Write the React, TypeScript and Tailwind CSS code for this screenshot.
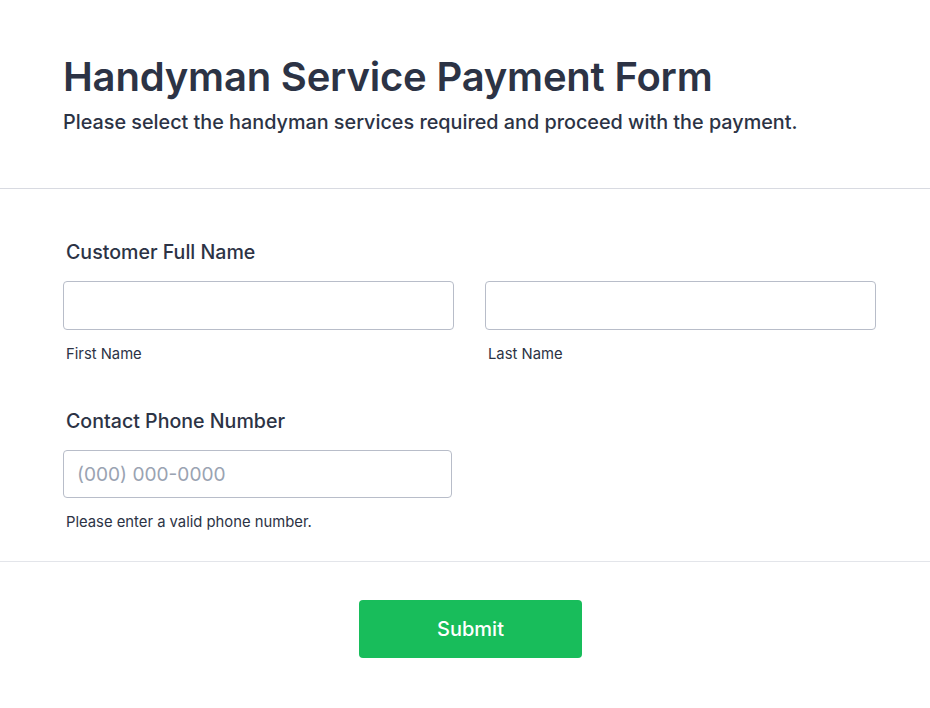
import React from "react";

export default function App() {
  return (
    <div className="min-h-screen bg-white text-[#2c3345]" style={{ fontFamily: "Inter, 'Noto Sans', sans-serif" }}>
      <div className="px-[63px] pt-[53px] pb-[54px]">
        <h1 className="text-[40px] leading-[48px] font-semibold tracking-[-0.2px]">Handyman Service Payment Form</h1>
        <p className="mt-[9px] text-[19.8px] leading-[24px] font-medium">Please select the handyman services required and proceed with the payment.</p>
      </div>
      <div className="border-t border-[#d8dae1]" />
      <div className="pl-[63px] pr-[54px] pt-[51px] pb-[30px]">
        <div className="pl-[3px] text-[19.6px] leading-[24px] font-medium">Customer Full Name</div>
        <div className="mt-[17px] flex gap-[31px]">
          <div className="w-[391px]">
            <div className="h-[49px] rounded-[4px] border border-[#b8bdc9] bg-white" />
            <div className="mt-[15px] pl-[3px] text-[14.8px] leading-[18px]">First Name</div>
          </div>
          <div className="w-[391px]">
            <div className="h-[49px] rounded-[4px] border border-[#b8bdc9] bg-white" />
            <div className="mt-[15px] pl-[3px] text-[14.8px] leading-[18px]">Last Name</div>
          </div>
        </div>
        <div className="mt-[46px] pl-[3px] text-[19.6px] leading-[24px] font-medium">Contact Phone Number</div>
        <div className="mt-[17px] w-[389px]">
          <div className="h-[48px] rounded-[4px] border border-[#b8bdc9] bg-white flex items-center px-[13px] text-[19.1px] text-[#9aa3b2]">(000) 000-0000</div>
          <div className="mt-[15px] pl-[3px] text-[14.8px] leading-[18px]">Please enter a valid phone number.</div>
        </div>
      </div>
      <div className="border-t border-[#e3e5ea]" />
      <div className="flex justify-center pt-[38px] pl-[11px]">
        <button className="w-[223px] h-[58px] rounded-[4px] bg-[#18bd5b] text-white text-[20px] font-medium">Submit</button>
      </div>
    </div>
  );
}
